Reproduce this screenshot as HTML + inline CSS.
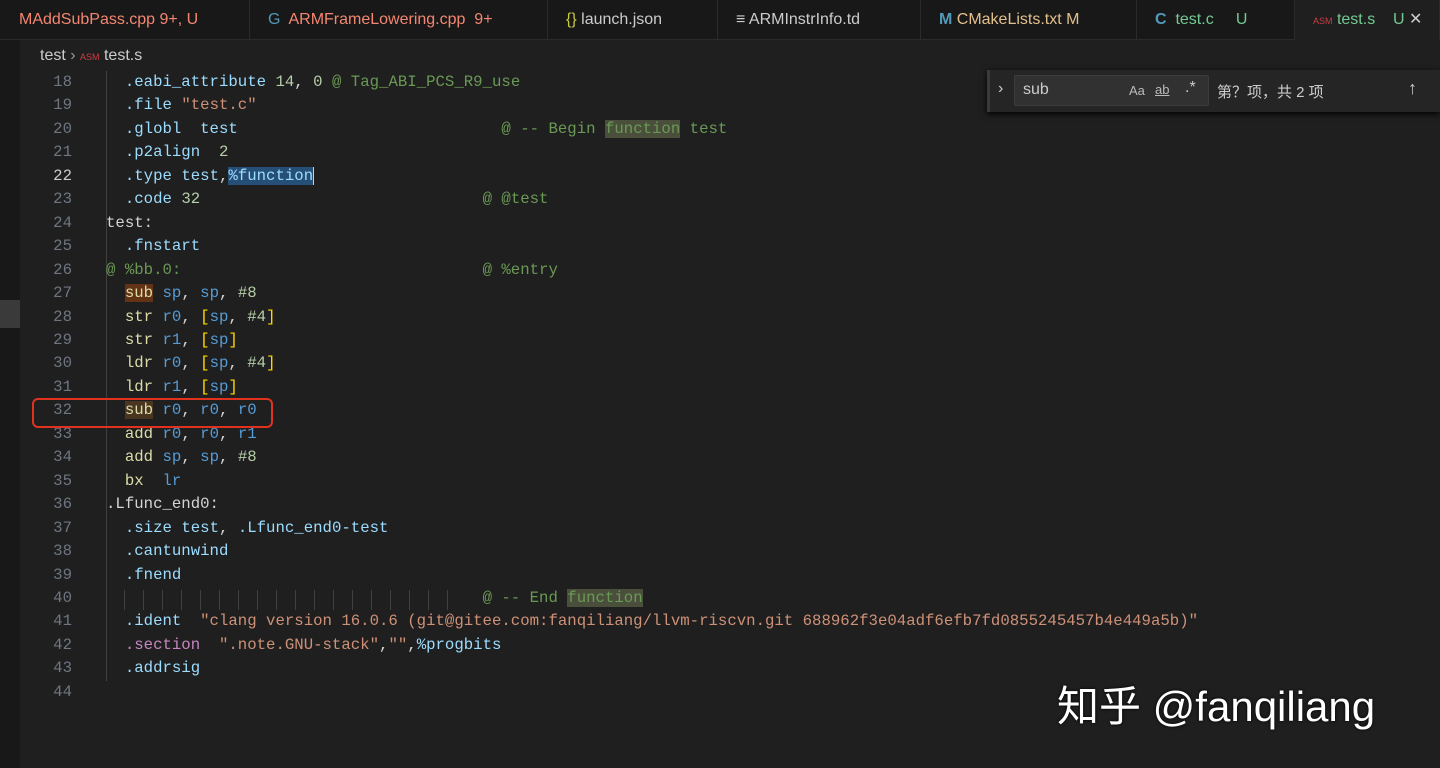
<!DOCTYPE html>
<html><head><meta charset="utf-8"><style>
*{margin:0;padding:0;box-sizing:border-box}
body{width:1440px;height:768px;background:#1f1f1f;overflow:hidden;position:relative;font-family:"Liberation Sans","Noto Sans CJK SC",sans-serif}
.side{position:absolute;left:0;top:0;width:20px;height:768px;background:#181818}
.tabs{position:absolute;left:0;top:0;width:1440px;height:40px;background:#181818;border-bottom:1px solid #2b2b2b}
.tab{position:absolute;top:0;height:40px;line-height:40px;font-size:16px;border-right:1px solid #2b2b2b;padding-left:18px;white-space:nowrap}
.crumb{position:absolute;left:40px;top:47px;font-size:16px;color:#cccccc}
.code{position:absolute;left:0;top:71px;font-family:"Liberation Mono",monospace;font-size:15.7px;line-height:23.46px;white-space:pre}
.ln{position:absolute;left:20px;top:0;width:52px;text-align:right;color:#6e7681}
.tx{position:absolute;left:106px;top:0;color:#d4d4d4}
.d{color:#9cdcfe}.c{color:#6a9955}.n{color:#b5cea8}.s{color:#ce9178}.i{color:#dcdcaa}.r{color:#569cd6}.b{color:#ffd700}.p{color:#c586c0}
.hl{background:#4a4f3c}
.find{position:absolute;left:987px;top:70px;width:453px;height:42px;background:#252526;box-shadow:0 2px 6px #000;border-left:3px solid #3a3a3a}
</style></head><body>
<div class="side"></div>
<div style="position:absolute;left:0;top:300px;width:20px;height:28px;background:#3a3a3a"></div>
<div class="tabs">
<div class="tab" style="left:0;width:250px;padding-left:19px;color:#f48771">MAddSubPass.cpp 9+, U</div>
<div class="tab" style="left:250px;width:298px;color:#f48771"><span style="color:#519aba">G</span>&nbsp; ARMFrameLowering.cpp&nbsp; 9+</div>
<div class="tab" style="left:548px;width:170px;color:#ccc"><span style="color:#cbcb41">{}</span> launch.json</div>
<div class="tab" style="left:718px;width:203px;color:#ccc">≡ ARMInstrInfo.td</div>
<div class="tab" style="left:921px;width:216px;color:#e2c08d"><b style="color:#519aba">M</b> CMakeLists.txt <span>M</span></div>
<div class="tab" style="left:1137px;width:158px;color:#73c991"><b style="color:#519aba">C</b>&nbsp; test.c&nbsp;&nbsp;&nbsp;&nbsp; U</div>
<div class="tab" style="left:1295px;width:145px;background:#1f1f1f;color:#73c991"><span style="color:#cc3e44;font-size:9px">ASM</span> test.s&nbsp;&nbsp;&nbsp; U <span style="color:#ccc">✕</span></div>
</div>
<div class="crumb">test <span style="color:#999">›</span> <span style="color:#cc3e44;font-size:9px">ASM</span> test.s</div>
<div style="position:absolute;left:106px;top:71px;width:1px;height:610px;background:#404040"></div>
<div class="code"><div class="ln">18
19
20
21
<span style="color:#ccc">22</span>
23
24
25
26
27
28
29
30
31
32
33
34
35
36
37
38
39
40
41
42
43
44</div><div class="tx">  <span class="d">.eabi_attribute</span> <span class="n">14</span>, <span class="n">0</span> <span class="c">@ Tag_ABI_PCS_R9_use</span>
  <span class="d">.file</span> <span class="s">"test.c"</span>
  <span class="d">.globl  test</span>                            <span class="c">@ -- Begin <span class="hl">function</span> test</span>
  <span class="d">.p2align</span>  <span class="n">2</span>
  <span class="d">.type</span> <span class="d">test</span>,<span class="d" style="background:#264f78">%function</span><span style="border-left:1px solid #ccc"></span>
  <span class="d">.code</span> <span class="n">32</span>                              <span class="c">@ @test</span>
test:
  <span class="d">.fnstart</span>
<span class="c">@ %bb.0:</span>                                <span class="c">@ %entry</span>
  <span class="i" style="background:#623315">sub</span> <span class="r">sp</span>, <span class="r">sp</span>, <span class="n">#8</span>
  <span class="i">str</span> <span class="r">r0</span>, <span class="b">[</span><span class="r">sp</span>, <span class="n">#4</span><span class="b">]</span>
  <span class="i">str</span> <span class="r">r1</span>, <span class="b">[</span><span class="r">sp</span><span class="b">]</span>
  <span class="i">ldr</span> <span class="r">r0</span>, <span class="b">[</span><span class="r">sp</span>, <span class="n">#4</span><span class="b">]</span>
  <span class="i">ldr</span> <span class="r">r1</span>, <span class="b">[</span><span class="r">sp</span><span class="b">]</span>
  <span class="i" style="background:#4a3520">sub</span> <span class="r">r0</span>, <span class="r">r0</span>, <span class="r">r0</span>
  <span class="i">add</span> <span class="r">r0</span>, <span class="r">r0</span>, <span class="r">r1</span>
  <span class="i">add</span> <span class="r">sp</span>, <span class="r">sp</span>, <span class="n">#8</span>
  <span class="i">bx</span>  <span class="r">lr</span>
.Lfunc_end0:
  <span class="d">.size</span> <span class="d">test</span>, <span class="d">.Lfunc_end0-test</span>
  <span class="d">.cantunwind</span>
  <span class="d">.fnend</span>
                                        <span class="c">@ -- End <span class="hl">function</span></span>
  <span class="d">.ident</span>  <span class="s">"clang version 16.0.6 (git@gitee.com:fanqiliang/llvm-riscvn.git 688962f3e04adf6efb7fd0855245457b4e449a5b)"</span>
  <span class="p">.section</span>  <span class="s">".note.GNU-stack"</span>,<span class="s">""</span>,<span class="d">%progbits</span>
  <span class="d">.addrsig</span></div></div>
<div style="position:absolute;left:124px;top:590px;width:340px;height:20px;background:repeating-linear-gradient(90deg,#404040 0 1px,transparent 1px 19px)"></div>
<div style="position:absolute;left:32px;top:398px;width:241px;height:30px;border:2.5px solid #e0321e;border-radius:6px"></div>
<div class="find">
<span style="position:absolute;left:8px;top:10px;color:#ccc;font-size:16px">›</span>
<div style="position:absolute;left:24px;top:5px;width:195px;height:31px;background:#313131;border:1px solid #3c3c3c;border-radius:2px">
<span style="position:absolute;left:8px;top:5px;color:#ccc;font-size:16px">sub</span>
<span style="position:absolute;left:114px;top:7px;color:#bbb;font-size:13px">Aa</span>
<span style="position:absolute;left:140px;top:6px;color:#bbb;font-size:13px;text-decoration:underline">ab</span>
<span style="position:absolute;left:170px;top:3px;color:#ccc;font-size:16px">.*</span>
</div>
<span style="position:absolute;left:227px;top:11px;color:#ccc;font-size:15px">第？项，共 2 项</span>
<span style="position:absolute;left:418px;top:8px;color:#ccc;font-size:18px">↑</span>
</div>
<div style="position:absolute;left:1057px;top:673px;color:#fff;font-size:42px;text-shadow:0 0 3px #000">知乎 @fanqiliang</div>
</body></html>
